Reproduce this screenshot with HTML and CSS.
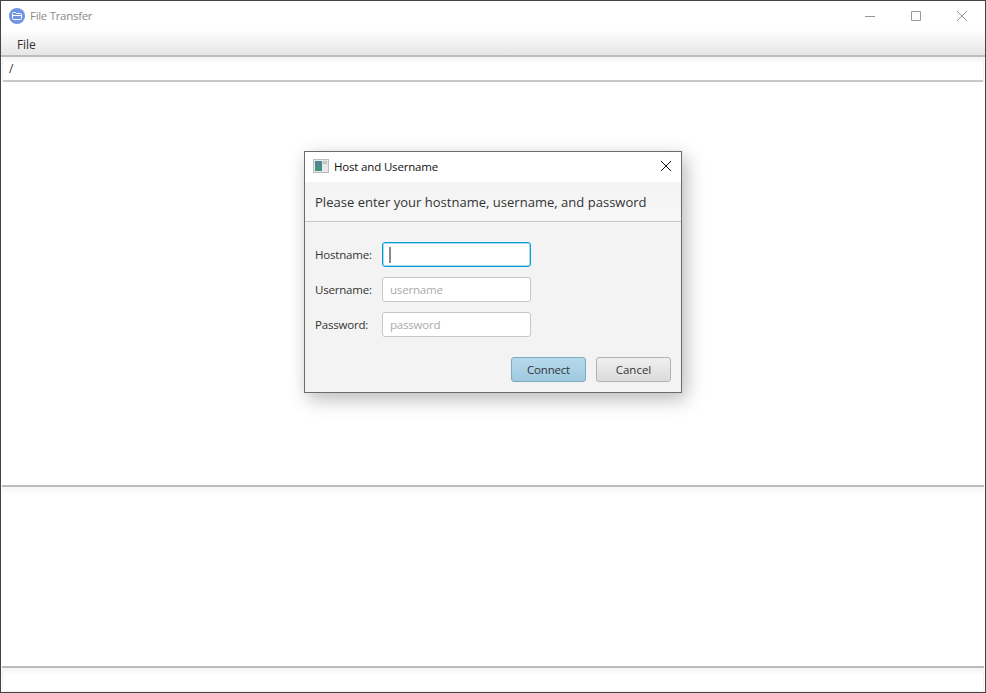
FILE: index.html
```html
<!DOCTYPE html>
<html lang="en">
<head>
<meta charset="utf-8">
<title>File Transfer</title>
<link rel="stylesheet" href="styles.css">
</head>
<body>
<div class="window">
  <header class="titlebar">
    <svg class="app-icon" viewBox="0 0 16 16" width="16" height="16"><circle cx="8" cy="8" r="8" fill="#6f94e3"/><path d="M3.5 5.5q0-1 1-1h2l1 1h4q1 0 1 1v4q0 1-1 1h-7q-1 0-1-1z" fill="none" stroke="#fff" stroke-width="1"/><path d="M3.5 7.5h9" stroke="#fff" stroke-width="1"/></svg>
    <span class="title">File Transfer</span>
    <div class="controls">
      <svg viewBox="0 0 46 30" width="46" height="30"><path d="M18 15.5h10" stroke="#999" fill="none"/></svg>
      <svg viewBox="0 0 46 30" width="46" height="30"><path d="M18.5 10.5h9v9h-9z" stroke="#999" fill="none"/></svg>
      <svg viewBox="0 0 46 30" width="46" height="30"><path d="M18 10l10 10M28 10L18 20" stroke="#999" fill="none"/></svg>
    </div>
  </header>
  <nav class="menubar"><span class="menu-item">File</span></nav>
  <div class="field path">/</div>
  <div class="pane list"></div>
  <div class="pane log"></div>
  <div class="field status"></div>
</div>

<section class="dialog">
  <div class="dlg-title">
    <svg class="dlg-icon" viewBox="0 0 16 14" width="16" height="14">
      <defs><linearGradient id="dlgfill" x1="0" y1="0" x2="0" y2="1"><stop offset="0" stop-color="#557f9a"/><stop offset="1" stop-color="#3f9a78"/></linearGradient></defs>
      <rect x=".5" y=".5" width="15" height="13" fill="#e6e9ea" stroke="#b9bdc0"/><rect x="2" y="2" width="7" height="10" fill="url(#dlgfill)"/><rect x="10" y="2" width="4" height="3" fill="#b5cbc2"/>
    </svg>
    <span class="dlg-name">Host and Username</span>
    <svg class="dlg-close" viewBox="0 0 12 12" width="12" height="12"><path d="M1 1l10 10M11 1L1 11" stroke="#111" fill="none"/></svg>
  </div>
  <div class="masthead">Please enter your hostname, username, and password</div>
  <div class="dlg-body">
    <form class="form">
      <label class="lbl">Hostname:</label>
      <div class="input focus"><span class="caret"></span></div>
      <label class="lbl">Username:</label>
      <div class="input ph">username</div>
      <label class="lbl">Password:</label>
      <div class="input ph">password</div>
    </form>
    <div class="buttons">
      <button class="btn primary" type="button">Connect</button>
      <button class="btn" type="button">Cancel</button>
    </div>
  </div>
</section>
</body>
</html>
```
FILE: styles.css
```css
* { box-sizing: border-box; }
html, body { margin: 0; height: 100%; }
body { font-family: "Open Sans", "Noto Sans", sans-serif; font-size: 12px; color: #333; background: #fff; overflow: hidden; }

.window { width: 986px; height: 693px; border: 1px solid #444; display: flex; flex-direction: column; background: #fff; }

.titlebar { height: 30px; display: flex; align-items: center; padding-left: 8px; flex: none; }
.app-icon { flex: none; }
.title { margin-left: 5px; margin-bottom: 2px; color: #8b8b8b; font-size: 11.5px; letter-spacing: -0.3px; }
.controls { margin-left: auto; display: flex; }

.menubar { height: 26px; flex: none; background: linear-gradient(#fdfdfd, #e6e6e6); border-bottom: 2px solid #bdbdbd; display: flex; align-items: center; padding: 2px 0 0 16px; }
.menu-item { color: #333; font-size: 12px; letter-spacing: -0.1px; }

.field { flex: none; margin: 0 1px; background: linear-gradient(#f3f3f3, #fff 7px); border-left: 1px solid #f0f0f0; border-right: 1px solid #f0f0f0; border-radius: 2px; padding-left: 6px; display: flex; align-items: center; }
.path { height: 25px; border-bottom: 2px solid #c8c8c8; }
.status { height: 24px; border-bottom: 1px solid #f0f0f0; }

.pane { background: #fff; margin: 0 1px; }
.list { height: 405px; border-bottom: 2px solid #bcbcbc; }
.log { flex: 1; background: linear-gradient(#f5f5f5, #fff 7px); border-bottom: 2px solid #bcbcbc; }

.dialog { position: absolute; left: 304px; top: 151px; width: 378px; height: 242px; background: #f3f3f3; border: 1px solid #6b6b6b; box-shadow: 4px 6px 18px rgba(0,0,0,.28); display: flex; flex-direction: column; }
.dlg-title { height: 30px; flex: none; background: #fff; display: flex; align-items: center; padding: 0 9px 2px 8px; }
.dlg-icon { flex: none; }
.dlg-name { margin-left: 5px; color: #111; font-size: 11.5px; letter-spacing: -0.17px; }
.dlg-close { margin-left: auto; }
.masthead { height: 40px; flex: none; background: linear-gradient(#f3f3f3, #f7f7f7); border-bottom: 1px solid #c8c8c8; padding-left: 10px; display: flex; align-items: center; font-size: 13px; letter-spacing: 0.02px; color: #333; }
.dlg-body { flex: 1; padding: 20px 10px 10px; display: flex; flex-direction: column; }
.form { display: grid; grid-template-columns: 67px 149px; row-gap: 10px; align-items: center; }
.lbl { color: #333; font-size: 11.5px; letter-spacing: -0.2px; }
.input { height: 25px; background: #fff; border: 1px solid #c6c6c6; border-radius: 3px; padding-left: 7px; display: flex; align-items: center; font-size: 11.5px; letter-spacing: -0.2px; }
.ph { color: #aaa; }
.focus { border: 1px solid #039ed3; box-shadow: inset 0 0 0 1px #a3dcf0; padding-left: 6px; }
.caret { width: 2px; height: 16px; background: #8a8a8a; }
.buttons { margin-top: auto; display: flex; justify-content: flex-end; gap: 10px; }
.btn { width: 75px; height: 25px; font: inherit; font-size: 11.5px; color: #333; border: 1px solid #b2b2b2; border-radius: 3px; background: linear-gradient(#efefef, #dcdcdc); padding: 0; }
.primary { border-color: #7fa9bf; background: linear-gradient(#b6d9ec, #9fcae0); letter-spacing: -0.2px; }
```
